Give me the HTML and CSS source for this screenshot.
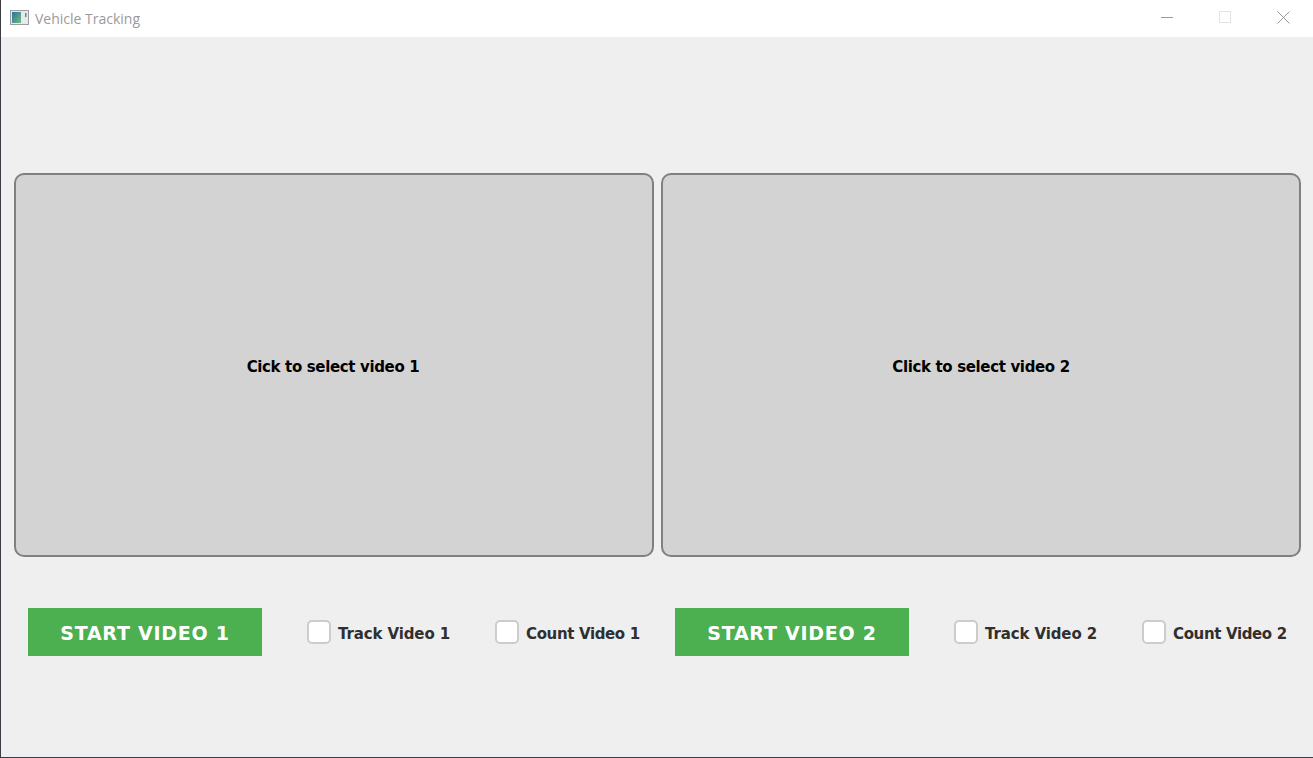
FILE: index.html
```html
<!DOCTYPE html>
<html lang="en">
<head>
<meta charset="utf-8">
<title>Vehicle Tracking</title>
<link rel="stylesheet" href="styles.css">
</head>
<body>
<div class="window">
  <header class="titlebar">
    <svg class="app-icon" width="20" height="16" viewBox="0 0 20 16">
      <defs><linearGradient id="g" x1="0" y1="0" x2="1" y2="1"><stop offset="0" stop-color="#2f6f9f"/><stop offset="1" stop-color="#6fbf7a"/></linearGradient></defs>
      <rect x="0.5" y="0.5" width="18" height="14" fill="#e6eae8" stroke="#9a9da3"/>
      <rect x="2" y="2" width="9" height="11" fill="url(#g)"/>
      <rect x="15" y="3" width="1.5" height="4" fill="#5f8f88"/>
    </svg>
    <span class="title">Vehicle Tracking</span>
    <div class="win-controls">
      <svg class="win-btn" width="13" height="13" viewBox="0 0 13 13"><path d="M0 6.5H12" stroke="#999" fill="none"/></svg>
      <svg class="win-btn" width="13" height="13" viewBox="0 0 13 13"><rect x="0.5" y="0.5" width="11" height="11" stroke="#e3e3e3" fill="none"/></svg>
      <svg class="win-btn" width="13" height="13" viewBox="0 0 13 13"><path d="M0.5 0.5L12.5 12.5M12.5 0.5L0.5 12.5" stroke="#999" fill="none"/></svg>
    </div>
  </header>
  <main class="content">
    <section class="panels">
      <div class="panel">Cick to select video 1</div>
      <div class="panel panel-second">Click to select video 2</div>
    </section>
    <section class="controls">
      <div class="group">
        <button class="start">START VIDEO 1</button>
        <label class="check"><span class="box"></span><span class="check-label">Track Video 1</span></label>
        <label class="check"><span class="box"></span><span class="check-label check-label-count">Count Video 1</span></label>
      </div>
      <div class="group">
        <button class="start">START VIDEO 2</button>
        <label class="check"><span class="box"></span><span class="check-label">Track Video 2</span></label>
        <label class="check"><span class="box"></span><span class="check-label check-label-count">Count Video 2</span></label>
      </div>
    </section>
  </main>
</div>
</body>
</html>
```
FILE: styles.css
```css
* { box-sizing: border-box; }
html, body { margin: 0; padding: 0; }
body { width: 1313px; height: 758px; overflow: hidden; font-family: "DejaVu Sans", sans-serif; }
.window {
  width: 1313px; height: 758px;
  display: flex; flex-direction: column;
  background: #efefef;
  border-left: 1px solid #3c3c44;
  border-bottom: 1px solid #3c3c44;
}
.titlebar {
  height: 37px; flex: none; background: #fff;
  display: flex; align-items: center;
  padding-left: 9px;
}
.app-icon { margin-top: -2px; }
.title {
  margin-left: 5px;
  font: 14px "Open Sans", sans-serif;
  color: #9a9a9a;
  margin-top: -1px;
}
.win-controls {
  margin-left: auto; display: flex; gap: 45px;
  padding-right: 23px; margin-top: -2px;
}
.win-btn { display: block; }
.content { flex: 1; padding-top: 136px; }
.panels { display: flex; gap: 7px; padding-left: 13px; }
.panel {
  width: 640px; height: 384px;
  background: #d3d3d3;
  border: 2px solid #808080;
  border-radius: 10px;
  display: flex; align-items: center; justify-content: center;
  font-weight: 700; font-size: 15px; color: #000;
  letter-spacing: -0.35px;
  padding: 4px 2px 0 0;
}
.panel-second { padding-right: 0; }
.controls { display: flex; margin-top: 51px; }
.group { width: 647px; flex: none; display: flex; align-items: center; padding-left: 27px; height: 48px; }
.start {
  width: 234px; height: 48px; border: 0; padding: 2px 0 0;
  background: #4caf50; color: #fff;
  font: 700 19px "DejaVu Sans", sans-serif;
  letter-spacing: 0.75px;
}
.check {
  display: flex; align-items: center;
  margin-left: 45px;
  font-weight: 700; font-size: 15px; color: #2f2f2f;
  letter-spacing: -0.12px;
}
.check-label { padding-top: 4px; }
.check-label-count { letter-spacing: -0.36px; }
.box {
  width: 24px; height: 24px; margin-right: 7px;
  background: #fff; border: 2px solid #ccc; border-radius: 5px;
}
```
